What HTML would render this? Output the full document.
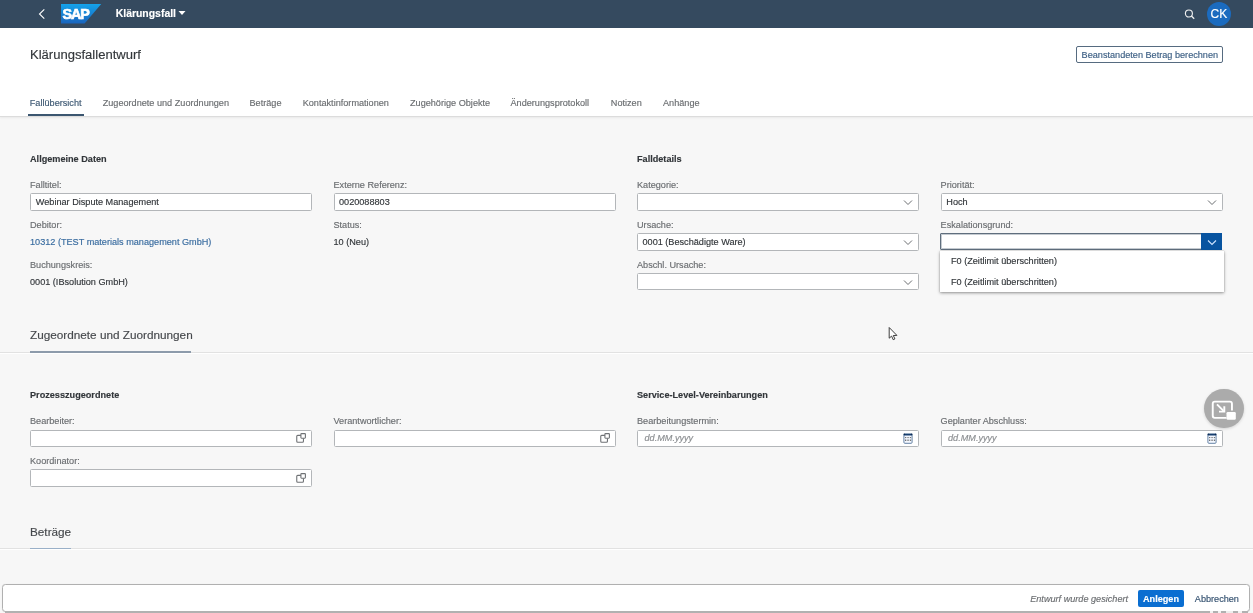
<!DOCTYPE html>
<html><head><meta charset="utf-8">
<style>
*{margin:0;padding:0;box-sizing:border-box}
html,body{width:1253px;height:613px;overflow:hidden;background:#f7f7f7;font-family:"Liberation Sans",sans-serif;color:#32363a}
.a{position:absolute}
.t{position:absolute;white-space:nowrap;line-height:1;font-size:9.14px;-webkit-text-stroke:0.15px currentColor}
.shell{position:absolute;left:0;top:0;width:1253px;height:27.5px;background:#354a5f}
.hdr{position:absolute;left:0;top:27.5px;width:1253px;height:88.5px;background:#fff;box-shadow:0 1px 0 #dcdcdc,0 2px 2px rgba(0,0,0,0.06)}
.tab{color:#6a6d70}
.lbl{color:#6a6d70}
.inp{position:absolute;height:17.4px;background:#fff;border:1px solid #b3b6b9;border-radius:1.5px}
.val{color:#32363a}
.sec{font-size:11.75px;color:#45484c}
.grp{font-weight:bold;color:#32363a}
</style></head><body>
<div id="root" style="position:absolute;left:0;top:0;width:1253px;height:613px;will-change:transform">
<!-- shell bar -->
<div class="shell"></div>
<svg class="a" style="left:36px;top:7px" width="12" height="14" viewBox="0 0 12 14"><path d="M8.3 2.3 L3.5 7 L8.3 11.7" fill="none" stroke="#fff" stroke-width="1.1"/></svg>
<svg class="a" style="left:60.7px;top:4.15px" width="41" height="20" viewBox="0 0 41 20">
<defs><linearGradient id="sg" x1="0" y1="0" x2="0" y2="1"><stop offset="0" stop-color="#14a3ea"/><stop offset="1" stop-color="#1a64bd"/></linearGradient></defs>
<polygon points="0,0 40.2,0 23.6,19.5 0,19.5" fill="url(#sg)"/>
<text x="1.5" y="15.2" font-family="Liberation Sans" font-weight="bold" font-size="14.3" fill="#fff" stroke="#fff" stroke-width="0.7" letter-spacing="-1">SAP</text>
</svg>
<div class="t" style="left:115.7px;top:8.96px;font-size:10.44px;font-weight:bold;color:#fff">Klärungsfall</div>
<svg class="a" style="left:178px;top:10.4px" width="8" height="6" viewBox="0 0 8 6"><polygon points="0.5,1 7.5,1 4,5" fill="#fff"/></svg>
<svg class="a" style="left:1183px;top:7.5px" width="13" height="13" viewBox="0 0 13 13"><circle cx="5.9" cy="5.5" r="3.5" fill="none" stroke="#f0f0f0" stroke-width="1.15"/><path d="M8.4 8 L11.2 10.8" stroke="#f0f0f0" stroke-width="1.3"/></svg>
<div class="a" style="left:1206.8px;top:2px;width:24px;height:24px;border-radius:50%;background:#1b6bbf"></div>
<div class="t" style="left:1210.5px;top:7.6px;font-size:12px;color:#fff">CK</div>

<!-- object page header -->
<div class="hdr"></div>
<div class="t" style="left:30px;top:48.25px;font-size:13.05px;color:#32363a">Klärungsfallentwurf</div>
<div class="a" style="left:1076px;top:46px;width:147px;height:17px;border:1px solid #566b80;border-radius:2px;background:#fff"></div>
<div class="t" style="left:1081.6px;top:51px;color:#3e6085">Beanstandeten Betrag berechnen</div>

<div class="t tab" style="left:29.8px;top:99.2px;color:#3d5873">Fallübersicht</div>
<div class="a" style="left:28px;top:114px;width:56px;height:2px;background:#3b5670"></div>
<div class="t tab" style="left:102.7px;top:99.2px">Zugeordnete und Zuordnungen</div>
<div class="t tab" style="left:249.5px;top:99.2px">Beträge</div>
<div class="t tab" style="left:302.7px;top:99.2px">Kontaktinformationen</div>
<div class="t tab" style="left:410px;top:99.2px">Zugehörige Objekte</div>
<div class="t tab" style="left:510.5px;top:99.2px">Änderungsprotokoll</div>
<div class="t tab" style="left:610.8px;top:99.2px">Notizen</div>
<div class="t tab" style="left:663px;top:99.2px">Anhänge</div>

<!-- Allgemeine Daten -->
<div class="t grp" style="left:30px;top:154.5px">Allgemeine Daten</div>
<div class="t lbl" style="left:30px;top:180.6px">Falltitel:</div>
<div class="inp" style="left:30px;top:193.3px;width:282px"></div>
<div class="t val" style="left:35.8px;top:197.8px">Webinar Dispute Management</div>
<div class="t lbl" style="left:30px;top:221px">Debitor:</div>
<div class="t" style="left:30px;top:237.6px;color:#386b9f">10312 (TEST materials management GmbH)</div>
<div class="t lbl" style="left:30px;top:260.8px">Buchungskreis:</div>
<div class="t val" style="left:30px;top:278px">0001 (IBsolution GmbH)</div>

<div class="t lbl" style="left:333.5px;top:180.6px">Externe Referenz:</div>
<div class="inp" style="left:333.5px;top:193.3px;width:282px"></div>
<div class="t val" style="left:339px;top:197.8px">0020088803</div>
<div class="t lbl" style="left:333.5px;top:221px">Status:</div>
<div class="t val" style="left:333.5px;top:237.9px">10 (Neu)</div>

<!-- Falldetails -->
<div class="t grp" style="left:637px;top:154.5px">Falldetails</div>
<div class="t lbl" style="left:637px;top:180.6px">Kategorie:</div>
<div class="inp" style="left:636.7px;top:193.3px;width:282.3px"></div>
<div class="t lbl" style="left:637px;top:221px">Ursache:</div>
<div class="inp" style="left:636.7px;top:233.2px;width:282.3px"></div>
<div class="t val" style="left:642.5px;top:237.8px">0001 (Beschädigte Ware)</div>
<div class="t lbl" style="left:637px;top:260.8px">Abschl. Ursache:</div>
<div class="inp" style="left:636.7px;top:273px;width:282.3px"></div>

<div class="t lbl" style="left:940.6px;top:180.6px">Priorität:</div>
<div class="inp" style="left:940.6px;top:193.3px;width:282px"></div>
<div class="t val" style="left:946.3px;top:197.8px">Hoch</div>
<div class="t lbl" style="left:940.6px;top:221px">Eskalationsgrund:</div>
<div class="a" style="left:940.4px;top:233.4px;width:282px;height:16.2px;background:#fff;border:1px solid #5f6e7d;border-radius:1px;box-shadow:inset 0 0 0 1px #c5cbd1"></div>
<div class="a" style="left:1201px;top:233.3px;width:21.2px;height:16.3px;background:#0854a0"></div>

<!-- chevrons -->
<svg class="a" style="left:903px;top:199px" width="10" height="7" viewBox="0 0 10 7"><path d="M1 1.5 L5 5.5 L9 1.5" fill="none" stroke="#6a6d70" stroke-width="1"/></svg>
<svg class="a" style="left:903px;top:239px" width="10" height="7" viewBox="0 0 10 7"><path d="M1 1.5 L5 5.5 L9 1.5" fill="none" stroke="#6a6d70" stroke-width="1"/></svg>
<svg class="a" style="left:903px;top:279px" width="10" height="7" viewBox="0 0 10 7"><path d="M1 1.5 L5 5.5 L9 1.5" fill="none" stroke="#6a6d70" stroke-width="1"/></svg>
<svg class="a" style="left:1206.5px;top:199px" width="10" height="7" viewBox="0 0 10 7"><path d="M1 1.5 L5 5.5 L9 1.5" fill="none" stroke="#6a6d70" stroke-width="1"/></svg>
<svg class="a" style="left:1206.8px;top:239px" width="10" height="7" viewBox="0 0 10 7"><path d="M1 1.5 L5 5.5 L9 1.5" fill="none" stroke="#cfe4ff" stroke-width="1.1"/></svg>

<!-- popover -->
<div class="a" style="left:940.4px;top:250.5px;width:283.2px;height:41.5px;background:#fff;box-shadow:0 1px 3px rgba(0,0,0,0.4),0 0 1px rgba(0,0,0,0.25)"></div>
<div class="t val" style="left:951px;top:256.5px">F0 (Zeitlimit überschritten)</div>
<div class="t val" style="left:951px;top:277.7px">F0 (Zeitlimit überschritten)</div>

<!-- cursor -->
<svg class="a" style="left:886px;top:325px" width="14" height="18" viewBox="0 0 14 18"><path d="M3.2 2.5 L3.2 13.2 L5.6 11.1 L7.2 14.7 L8.9 13.9 L7.3 10.5 L10.9 10.4 Z" fill="#fff" stroke="#2a2a2a" stroke-width="0.9" stroke-linejoin="round"/></svg>

<!-- section 2 -->
<div class="t sec" style="left:30px;top:329.25px">Zugeordnete und Zuordnungen</div>
<div class="a" style="left:0;top:352px;width:1253px;height:1px;background:#e2e2e2;box-shadow:0 1px 0 #fff"></div>
<div class="a" style="left:30px;top:351px;width:161px;height:2px;background:#8d9bab"></div>

<div class="t grp" style="left:30px;top:390.9px">Prozesszugeordnete</div>
<div class="t lbl" style="left:30px;top:417px">Bearbeiter:</div>
<div class="inp" style="left:30px;top:429.5px;width:282px"></div>
<div class="t lbl" style="left:30px;top:456.5px">Koordinator:</div>
<div class="inp" style="left:30px;top:469.4px;width:282px"></div>
<div class="t lbl" style="left:333.5px;top:417px">Verantwortlicher:</div>
<div class="inp" style="left:333.5px;top:429.5px;width:282px"></div>

<div class="t grp" style="left:637px;top:390.9px">Service-Level-Vereinbarungen</div>
<div class="t lbl" style="left:637px;top:417px">Bearbeitungstermin:</div>
<div class="inp" style="left:636.7px;top:429.5px;width:282.3px"></div>
<div class="t" style="left:644.5px;top:434px;font-style:italic;color:#8a8d90">dd.MM.yyyy</div>
<div class="t lbl" style="left:940.6px;top:417px">Geplanter Abschluss:</div>
<div class="inp" style="left:940.6px;top:429.5px;width:282px"></div>
<div class="t" style="left:948px;top:434px;font-style:italic;color:#8a8d90">dd.MM.yyyy</div>

<!-- value help icons -->
<svg class="a" style="left:295px;top:432px" width="12" height="12" viewBox="0 0 12 12"><path d="M6.05 3.35 H2.75 Q1.75 3.35 1.75 4.35 V9.25 Q1.75 10.25 2.75 10.25 H7.45 Q8.45 10.25 8.45 9.25 V6.15" fill="none" stroke="#6f7275" stroke-width="1.1"/><rect x="5.9" y="1.6" width="4.5" height="4.6" rx="0.6" fill="#fff" stroke="#6f7275" stroke-width="1.1"/></svg>
<svg class="a" style="left:295px;top:472px" width="12" height="12" viewBox="0 0 12 12"><path d="M6.05 3.35 H2.75 Q1.75 3.35 1.75 4.35 V9.25 Q1.75 10.25 2.75 10.25 H7.45 Q8.45 10.25 8.45 9.25 V6.15" fill="none" stroke="#6f7275" stroke-width="1.1"/><rect x="5.9" y="1.6" width="4.5" height="4.6" rx="0.6" fill="#fff" stroke="#6f7275" stroke-width="1.1"/></svg>
<svg class="a" style="left:598.5px;top:432px" width="12" height="12" viewBox="0 0 12 12"><path d="M6.05 3.35 H2.75 Q1.75 3.35 1.75 4.35 V9.25 Q1.75 10.25 2.75 10.25 H7.45 Q8.45 10.25 8.45 9.25 V6.15" fill="none" stroke="#6f7275" stroke-width="1.1"/><rect x="5.9" y="1.6" width="4.5" height="4.6" rx="0.6" fill="#fff" stroke="#6f7275" stroke-width="1.1"/></svg>
<!-- calendar icons -->
<svg class="a" style="left:903px;top:433px" width="10" height="11" viewBox="0 0 10 11"><rect x="0.9" y="0.9" width="8.2" height="9.4" rx="1" fill="#f4f8ff" stroke="#56769c" stroke-width="0.9"/><rect x="0.9" y="0.9" width="8.2" height="1.6" fill="#173f70"/><circle cx="1.3" cy="1.3" r="0.8" fill="#0d2a50"/><circle cx="8.7" cy="1.3" r="0.8" fill="#0d2a50"/><g fill="#555"><rect x="2" y="4.2" width="1.3" height="0.9"/><rect x="4.4" y="4.2" width="1.3" height="0.9"/><rect x="6.8" y="4.2" width="1.3" height="0.9"/><rect x="2" y="6.6" width="1.3" height="1.2"/><rect x="4.4" y="6.6" width="1.3" height="1.2"/><rect x="6.8" y="6.6" width="1.3" height="1.2"/></g></svg>
<svg class="a" style="left:1206.5px;top:433px" width="10" height="11" viewBox="0 0 10 11"><rect x="0.9" y="0.9" width="8.2" height="9.4" rx="1" fill="#f4f8ff" stroke="#56769c" stroke-width="0.9"/><rect x="0.9" y="0.9" width="8.2" height="1.6" fill="#173f70"/><circle cx="1.3" cy="1.3" r="0.8" fill="#0d2a50"/><circle cx="8.7" cy="1.3" r="0.8" fill="#0d2a50"/><g fill="#555"><rect x="2" y="4.2" width="1.3" height="0.9"/><rect x="4.4" y="4.2" width="1.3" height="0.9"/><rect x="6.8" y="4.2" width="1.3" height="0.9"/><rect x="2" y="6.6" width="1.3" height="1.2"/><rect x="4.4" y="6.6" width="1.3" height="1.2"/><rect x="6.8" y="6.6" width="1.3" height="1.2"/></g></svg>

<!-- floating button -->
<div class="a" style="left:1204.3px;top:388.8px;width:39.6px;height:39.6px;border-radius:50%;background:#ababab;box-shadow:0 1px 3px rgba(0,0,0,0.15)"></div>
<svg class="a" style="left:1204.3px;top:388.8px" width="40" height="40" viewBox="0 0 40 40"><path d="M22.5 28.85 H10.75 Q8.75 28.85 8.75 26.85 V14.65 Q8.75 12.65 10.75 12.65 H25.95 Q27.95 12.65 27.95 14.65 V21.5" fill="none" stroke="#fff" stroke-width="1.9"/><rect x="22.5" y="23" width="9.3" height="7.8" rx="1.3" fill="#fff"/><path d="M13 15.3 L19.5 21.8" stroke="#fff" stroke-width="1.9"/><path d="M20.3 17.3 V22.6 H15" fill="none" stroke="#fff" stroke-width="1.9"/></svg>

<!-- section 3 -->
<div class="t sec" style="left:30px;top:526.35px">Beträge</div>
<div class="a" style="left:0;top:548px;width:1253px;height:1px;background:#e2e2e2;box-shadow:0 1px 0 #fff"></div>
<div class="a" style="left:30px;top:547.5px;width:41px;height:1.5px;background:#9ab0c8"></div>

<!-- footer -->
<div class="a" style="left:2.3px;top:584px;width:1247.8px;height:27.5px;background:#fff;border:1.2px solid #b0b0b0;border-radius:3.5px;box-shadow:0 0 1px rgba(0,0,0,0.1)"></div>
<div class="a" style="left:5px;top:610.6px;width:1243px;height:2.4px;background:#b1b1b1"></div>
<div class="a" style="left:1210px;top:610.6px;width:3px;height:2.4px;background:#f2f2f2"></div>
<div class="a" style="left:1217.6px;top:610.6px;width:3.4px;height:2.4px;background:#f2f2f2"></div>
<div class="a" style="left:1225.7px;top:610.6px;width:7.5px;height:2.4px;background:#eeeeee"></div>
<div class="a" style="left:1237.7px;top:610.6px;width:4.6px;height:2.4px;background:#f2f2f2"></div>
<div class="t" style="left:1030.2px;top:595.3px;font-style:italic;color:#6a6d70">Entwurf wurde gesichert</div>
<div class="a" style="left:1137.7px;top:590.2px;width:46px;height:16.4px;background:#0a6ed1;border-radius:2px"></div>
<div class="t" style="left:1143px;top:595.3px;font-weight:bold;color:#fff">Anlegen</div>
<div class="t" style="left:1194.8px;top:595.3px;color:#33506f">Abbrechen</div>
</div>
</body></html>
